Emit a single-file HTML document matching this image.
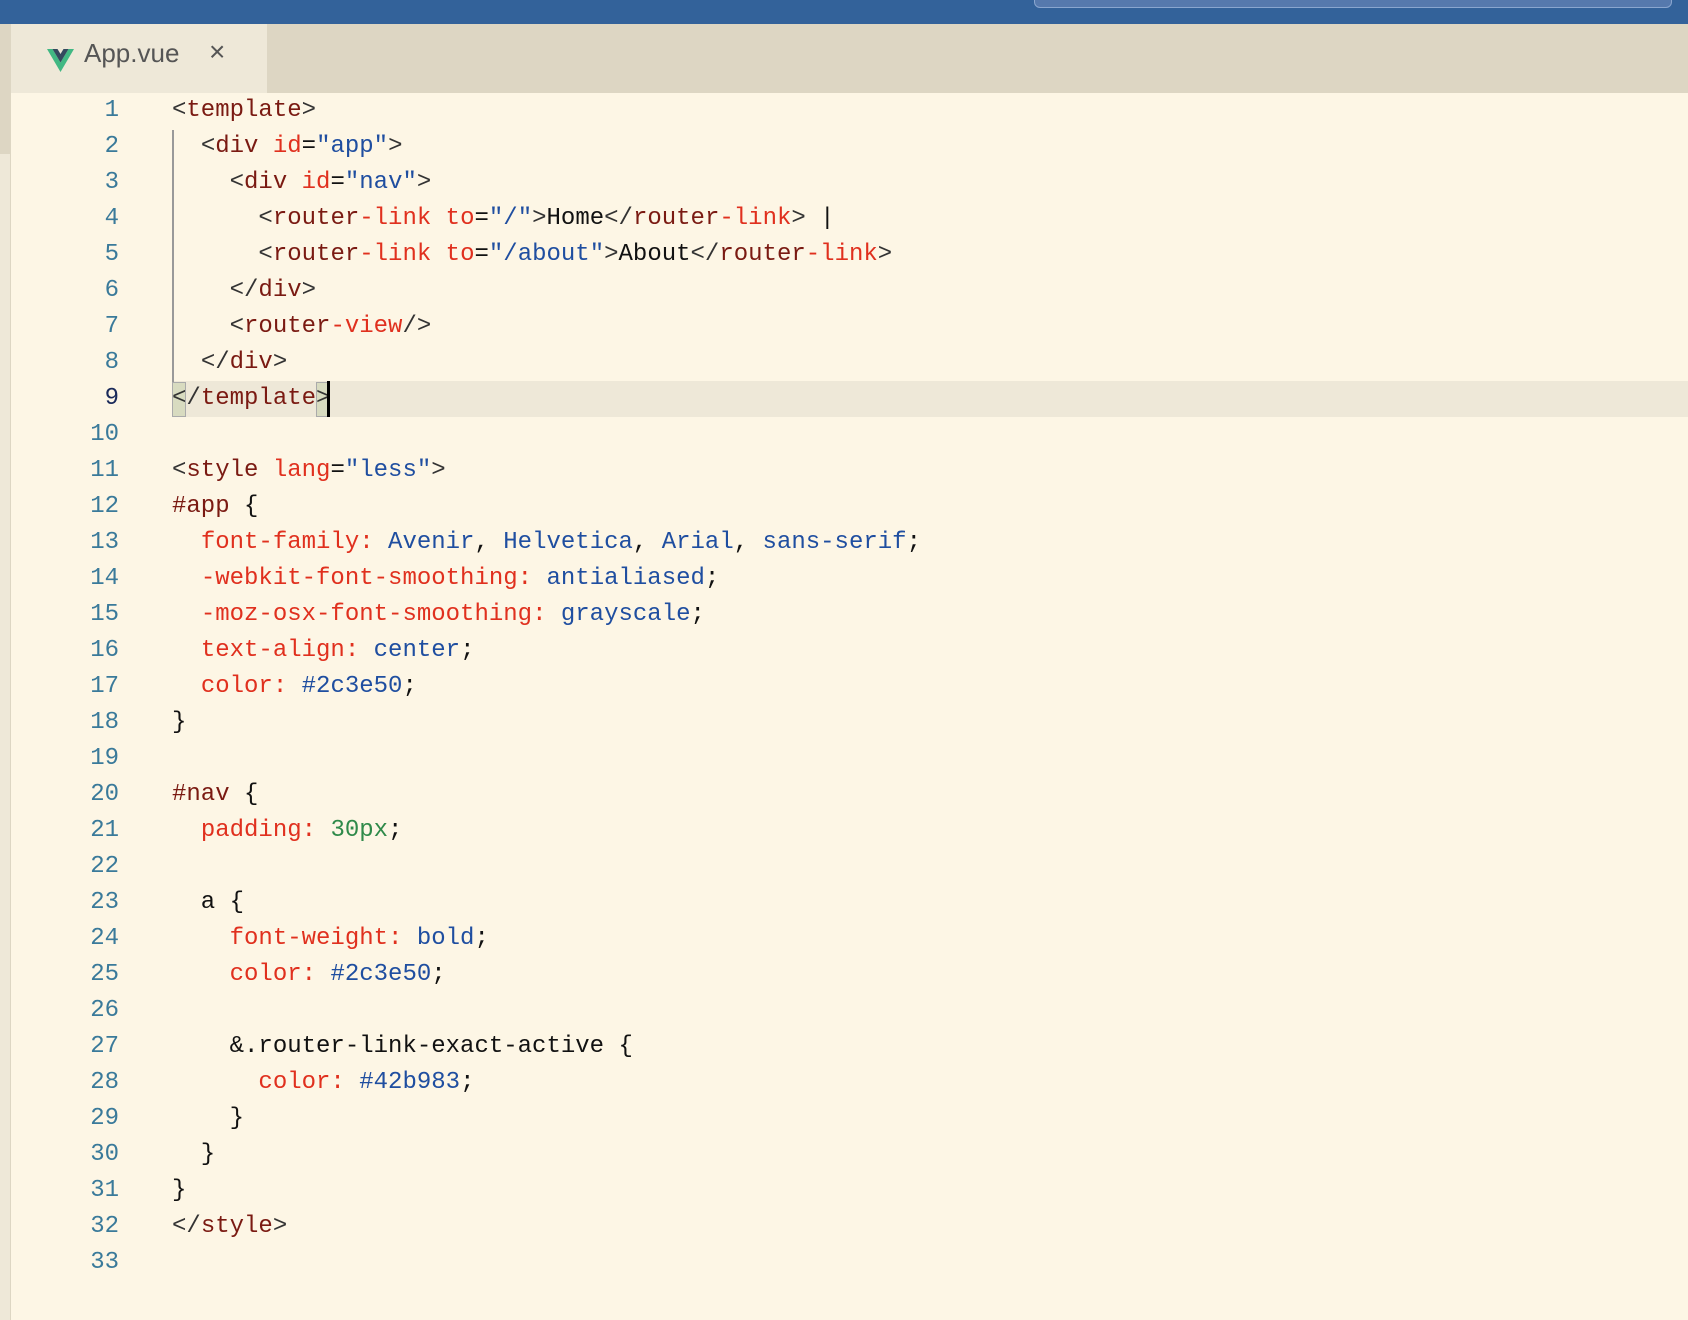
<!DOCTYPE html>
<html><head><meta charset="utf-8"><style>
body{margin:0;width:1688px;height:1320px;overflow:hidden;background:#fdf6e5;position:relative;font-family:"Liberation Mono",monospace}
.top{position:absolute;left:0;top:0;width:1688px;height:24px;background:#33629a}
.search{position:absolute;left:1034px;top:-4px;width:636px;height:10px;background:#5679ad;border:1px solid #8aa6cf;border-radius:0 0 6px 6px}
.tabbar{position:absolute;left:0;top:24px;width:1688px;height:69px;background:#ddd6c3}
.tab{position:absolute;left:11px;top:24px;width:256px;height:69px;background:#eee8d8}
.tab .t{position:absolute;left:73px;top:14px;font:26px "Liberation Sans",sans-serif;color:#555}
.tab .x{position:absolute;left:198px;top:12px;font:28px "Liberation Sans",sans-serif;color:#555}
.ls1{position:absolute;left:0;top:93px;width:11px;height:61px;background:#ddd6c3}
.ls2{position:absolute;left:0;top:154px;width:10px;height:1166px;background:#eee8d8;border-right:1px solid #ddd6c3}
.hl{position:absolute;left:172px;top:381px;width:1516px;height:36px;background:#eee8d8}
.guide{position:absolute;left:172px;top:130px;width:2px;height:252px;background:#999}
.ln{position:absolute;left:40px;width:79px;text-align:right;font-size:24px;line-height:36px;color:#3a7a9a}
.cl{position:absolute;left:172px;font-size:24px;line-height:36px;white-space:pre;color:#111}
.b{color:#333}.tg{color:#7a1a12}.a{color:#e0301e}.s{color:#1f4ea0}.n{color:#2f8a4a}
.box{position:absolute;top:382px;width:12px;height:33px;background:#d8dbc0;border:1px solid #aaa}
.cur{position:absolute;left:327px;top:381px;width:3px;height:36px;background:#000}
</style></head><body>
<div class="top"><div class="search"></div></div>
<div class="tabbar"></div>
<div class="tab">
<svg style="position:absolute;left:36px;top:25px" width="27" height="23" viewBox="0 0 27 23"><path d="M0 0h5.5L13.5 13.5 21.5 0H27L13.5 23Z" fill="#41b883"/><path d="M5.5 0h5l3 5 3-5h5l-8 13.5Z" fill="#34495e"/></svg>
<div class="t">App.vue</div><div class="x">×</div></div>
<div class="ls1"></div><div class="ls2"></div>
<div class="hl"></div>
<div class="guide"></div>
<div class="box" style="left:172px"></div><div class="box" style="left:316px"></div>
<div id="nums"></div>
<div class="ln" style="top:93px">1</div><div class="ln" style="top:129px">2</div><div class="ln" style="top:165px">3</div><div class="ln" style="top:201px">4</div><div class="ln" style="top:237px">5</div><div class="ln" style="top:273px">6</div><div class="ln" style="top:309px">7</div><div class="ln" style="top:345px">8</div><div class="ln" style="top:381px;color:#1a2a5a">9</div><div class="ln" style="top:417px">10</div><div class="ln" style="top:453px">11</div><div class="ln" style="top:489px">12</div><div class="ln" style="top:525px">13</div><div class="ln" style="top:561px">14</div><div class="ln" style="top:597px">15</div><div class="ln" style="top:633px">16</div><div class="ln" style="top:669px">17</div><div class="ln" style="top:705px">18</div><div class="ln" style="top:741px">19</div><div class="ln" style="top:777px">20</div><div class="ln" style="top:813px">21</div><div class="ln" style="top:849px">22</div><div class="ln" style="top:885px">23</div><div class="ln" style="top:921px">24</div><div class="ln" style="top:957px">25</div><div class="ln" style="top:993px">26</div><div class="ln" style="top:1029px">27</div><div class="ln" style="top:1065px">28</div><div class="ln" style="top:1101px">29</div><div class="ln" style="top:1137px">30</div><div class="ln" style="top:1173px">31</div><div class="ln" style="top:1209px">32</div><div class="ln" style="top:1245px">33</div>
<div class="cl" style="top:93px"><span class="b">&lt;</span><span class="tg">template</span><span class="b">&gt;</span></div>
<div class="cl" style="top:129px">  <span class="b">&lt;</span><span class="tg">div</span> <span class="a">id</span>=<span class="s">"app"</span><span class="b">&gt;</span></div>
<div class="cl" style="top:165px">    <span class="b">&lt;</span><span class="tg">div</span> <span class="a">id</span>=<span class="s">"nav"</span><span class="b">&gt;</span></div>
<div class="cl" style="top:201px">      <span class="b">&lt;</span><span class="tg">router</span><span class="a">-link</span> <span class="a">to</span>=<span class="s">"/"</span><span class="b">&gt;</span>Home<span class="b">&lt;/</span><span class="tg">router</span><span class="a">-link</span><span class="b">&gt;</span> |</div>
<div class="cl" style="top:237px">      <span class="b">&lt;</span><span class="tg">router</span><span class="a">-link</span> <span class="a">to</span>=<span class="s">"/about"</span><span class="b">&gt;</span>About<span class="b">&lt;/</span><span class="tg">router</span><span class="a">-link</span><span class="b">&gt;</span></div>
<div class="cl" style="top:273px">    <span class="b">&lt;/</span><span class="tg">div</span><span class="b">&gt;</span></div>
<div class="cl" style="top:309px">    <span class="b">&lt;</span><span class="tg">router</span><span class="a">-view</span><span class="b">/&gt;</span></div>
<div class="cl" style="top:345px">  <span class="b">&lt;/</span><span class="tg">div</span><span class="b">&gt;</span></div>
<div class="cl" style="top:381px"><span class="b">&lt;/</span><span class="tg">template</span><span class="b">&gt;</span></div>
<div class="cl" style="top:453px"><span class="b">&lt;</span><span class="tg">style</span> <span class="a">lang</span>=<span class="s">"less"</span><span class="b">&gt;</span></div>
<div class="cl" style="top:489px"><span class="tg">#app</span> {</div>
<div class="cl" style="top:525px">  <span class="a">font-family:</span> <span class="s">Avenir</span>, <span class="s">Helvetica</span>, <span class="s">Arial</span>, <span class="s">sans-serif</span>;</div>
<div class="cl" style="top:561px">  <span class="a">-webkit-font-smoothing:</span> <span class="s">antialiased</span>;</div>
<div class="cl" style="top:597px">  <span class="a">-moz-osx-font-smoothing:</span> <span class="s">grayscale</span>;</div>
<div class="cl" style="top:633px">  <span class="a">text-align:</span> <span class="s">center</span>;</div>
<div class="cl" style="top:669px">  <span class="a">color:</span> <span class="s">#2c3e50</span>;</div>
<div class="cl" style="top:705px">}</div>
<div class="cl" style="top:777px"><span class="tg">#nav</span> {</div>
<div class="cl" style="top:813px">  <span class="a">padding:</span> <span class="n">30px</span>;</div>
<div class="cl" style="top:885px">  a {</div>
<div class="cl" style="top:921px">    <span class="a">font-weight:</span> <span class="s">bold</span>;</div>
<div class="cl" style="top:957px">    <span class="a">color:</span> <span class="s">#2c3e50</span>;</div>
<div class="cl" style="top:1029px">    &amp;.router-link-exact-active {</div>
<div class="cl" style="top:1065px">      <span class="a">color:</span> <span class="s">#42b983</span>;</div>
<div class="cl" style="top:1101px">    }</div>
<div class="cl" style="top:1137px">  }</div>
<div class="cl" style="top:1173px">}</div>
<div class="cl" style="top:1209px"><span class="b">&lt;/</span><span class="tg">style</span><span class="b">&gt;</span></div>
<div class="cur"></div>
</body></html>
